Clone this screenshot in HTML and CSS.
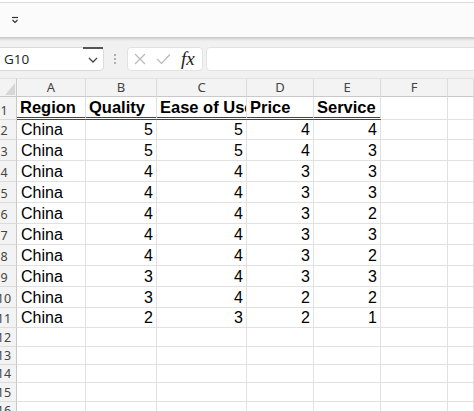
FILE: index.html
```html
<!DOCTYPE html>
<html>
<head>
<meta charset="utf-8">
<link rel="stylesheet" href="styles.css">
</head>
<body>
<div class="topstrip"></div>
<div class="toolbar">
  <svg class="qat" width="8" height="8" viewBox="0 0 8 8"><path d="M1 1.5H7" stroke="#333" stroke-width="1.2" fill="none"/><path d="M1.5 4L4 6.5L6.5 4" stroke="#333" stroke-width="1.2" fill="none"/></svg>
</div>
<div class="fbar">
  <div class="namebox">
    <span class="namebox-text">G10</span>
    <span class="namebox-btn"><svg width="10" height="6" viewBox="0 0 10 6"><path d="M1 1L5 5L9 1" stroke="#444" stroke-width="1.3" fill="none"/></svg></span>
  </div>
  <div class="dots"><i></i><i></i><i></i></div>
  <div class="fxbox">
    <svg class="ico-x" width="12" height="12" viewBox="0 0 12 12"><path d="M1 1L11 11M11 1L1 11" stroke="#b9b9b9" stroke-width="1.2" fill="none"/></svg>
    <svg class="ico-check" width="15" height="12" viewBox="0 0 15 12"><path d="M1 6L5.5 10.5L14 1.5" stroke="#b9b9b9" stroke-width="1.2" fill="none"/></svg>
    <span class="fx">fx</span>
  </div>
  <div class="finput"></div>
</div>
<div class="sheet">
  <div class="corner"><svg width="10" height="12" viewBox="0 0 10 12"><polygon points="10,0 10,12 0,12" fill="#d6d6d6"/></svg></div>
  <div class="ch">A</div><div class="ch">B</div><div class="ch">C</div><div class="ch">D</div><div class="ch">E</div><div class="ch">F</div><div class="ch"></div>

  <div class="rh"><span>1</span></div>
  <div class="c hd">Region</div><div class="c hd">Quality</div><div class="c hd">Ease of Use</div><div class="c hd">Price</div><div class="c hd">Service</div><div class="c"></div><div class="c"></div>

  <div class="rh"><span>2</span></div>
  <div class="c">China</div><div class="c n">5</div><div class="c n">5</div><div class="c n">4</div><div class="c n">4</div><div class="c"></div><div class="c"></div>
  <div class="rh"><span>3</span></div>
  <div class="c">China</div><div class="c n">5</div><div class="c n">5</div><div class="c n">4</div><div class="c n">3</div><div class="c"></div><div class="c"></div>
  <div class="rh"><span>4</span></div>
  <div class="c">China</div><div class="c n">4</div><div class="c n">4</div><div class="c n">3</div><div class="c n">3</div><div class="c"></div><div class="c"></div>
  <div class="rh"><span>5</span></div>
  <div class="c">China</div><div class="c n">4</div><div class="c n">4</div><div class="c n">3</div><div class="c n">3</div><div class="c"></div><div class="c"></div>
  <div class="rh"><span>6</span></div>
  <div class="c">China</div><div class="c n">4</div><div class="c n">4</div><div class="c n">3</div><div class="c n">2</div><div class="c"></div><div class="c"></div>
  <div class="rh"><span>7</span></div>
  <div class="c">China</div><div class="c n">4</div><div class="c n">4</div><div class="c n">3</div><div class="c n">3</div><div class="c"></div><div class="c"></div>
  <div class="rh"><span>8</span></div>
  <div class="c">China</div><div class="c n">4</div><div class="c n">4</div><div class="c n">3</div><div class="c n">2</div><div class="c"></div><div class="c"></div>
  <div class="rh"><span>9</span></div>
  <div class="c">China</div><div class="c n">3</div><div class="c n">4</div><div class="c n">3</div><div class="c n">3</div><div class="c"></div><div class="c"></div>
  <div class="rh"><span>10</span></div>
  <div class="c">China</div><div class="c n">3</div><div class="c n">4</div><div class="c n">2</div><div class="c n">2</div><div class="c"></div><div class="c"></div>
  <div class="rh"><span>11</span></div>
  <div class="c">China</div><div class="c n">2</div><div class="c n">3</div><div class="c n">2</div><div class="c n">1</div><div class="c"></div><div class="c"></div>

  <div class="rh"><span>12</span></div>
  <div class="c"></div><div class="c"></div><div class="c"></div><div class="c"></div><div class="c"></div><div class="c"></div><div class="c"></div>
  <div class="rh"><span>13</span></div>
  <div class="c"></div><div class="c"></div><div class="c"></div><div class="c"></div><div class="c"></div><div class="c"></div><div class="c"></div>
  <div class="rh"><span>14</span></div>
  <div class="c"></div><div class="c"></div><div class="c"></div><div class="c"></div><div class="c"></div><div class="c"></div><div class="c"></div>
  <div class="rh"><span>15</span></div>
  <div class="c"></div><div class="c"></div><div class="c"></div><div class="c"></div><div class="c"></div><div class="c"></div><div class="c"></div>
  <div class="rh"><span>16</span></div>
  <div class="c"></div><div class="c"></div><div class="c"></div><div class="c"></div><div class="c"></div><div class="c"></div><div class="c"></div>
</div>
</body>
</html>
```
FILE: styles.css
```css
* { box-sizing: border-box; }
html, body { margin: 0; padding: 0; }
body {
  width: 474px;
  height: 411px;
  overflow: hidden;
  background: #f1f1f1;
  font-family: "Liberation Sans", Arial, sans-serif;
}
.topstrip { height: 2px; background: #ffffff; }
.toolbar {
  height: 35px;
  margin: 0 -12px 0 -10px;
  background: #fbfbfb;
  border-top: 1px solid #dcdcdc;
  border-radius: 8px;
  box-shadow: 0 2px 3px rgba(0,0,0,0.18);
  display: flex;
  align-items: center;
  padding-left: 21px;
}
.qat { display: block; }
.fbar {
  display: flex;
  align-items: center;
  margin-top: 10px;
  height: 24px;
}
.namebox {
  margin-left: -8px;
  width: 112px;
  height: 24px;
  background: #ffffff;
  border: 1px solid #dadada;
  border-radius: 4px;
  display: flex;
  align-items: center;
  justify-content: space-between;
  padding-left: 11px;
  font-family: "Open Sans", "Noto Sans", sans-serif;
  font-size: 13.5px;
  color: #222;
}
.namebox-text { line-height: 22px; }
.namebox-btn {
  width: 20px;
  height: 23px;
  margin-top: -1px;
  border-top: 2px solid #555;
  display: flex;
  align-items: center;
  justify-content: center;
}
.dots {
  margin-left: 9px;
  width: 4px;
  display: flex;
  flex-direction: column;
  align-items: center;
  gap: 2px;
}
.dots i { width: 2px; height: 2px; background: #999; border-radius: 1px; display: block; }
.fxbox {
  margin-left: 10px;
  width: 76px;
  height: 24px;
  background: #ffffff;
  border: 1px solid #e2e2e2;
  border-radius: 4px;
  display: flex;
  align-items: center;
  padding-left: 6px;
}
.ico-x { display: block; }
.ico-check { display: block; margin-left: 10px; }
.fx {
  margin-left: 10px;
  font-family: "Liberation Serif", "Times New Roman", serif;
  font-style: italic;
  font-size: 19px;
  color: #222;
  line-height: 20px;
}
.finput {
  margin-left: 3px;
  flex: 1;
  margin-right: -10px;
  height: 24px;
  background: #ffffff;
  border: 1px solid #e2e2e2;
  border-radius: 4px;
}
.sheet {
  margin-top: 7px;
  display: grid;
  grid-template-columns: 17px 69px 71px 90px 67px 67px 67px 1fr;
  grid-template-rows: 18.5px 23px repeat(10, 20.9px) repeat(5, 18.3px);
  background: #ffffff;
}
.corner {
  background: #f3f3f3;
  border-right: 1px solid #c9c9c9;
  border-bottom: 1px solid #c9c9c9;
  border-top: 1px solid #e2e2e2;
  display: flex;
  align-items: flex-end;
  justify-content: flex-end;
  padding: 0 1px 1px 0;
}
.corner svg { display: block; }
.ch {
  background: #f3f3f3;
  border-top: 1px solid #e2e2e2;
  border-right: 1px solid #dcdcdc;
  border-bottom: 1px solid #c9c9c9;
  font-family: "Noto Sans", "Open Sans", sans-serif;
  font-size: 13px;
  color: #444;
  text-align: center;
  line-height: 17px;
}
.rh {
  background: #f3f3f3;
  border-right: 1px solid #c9c9c9;
  border-bottom: 1px solid #dcdcdc;
  overflow: hidden;
  display: flex;
  align-items: flex-end;
  font-family: "Noto Sans", "Open Sans", sans-serif;
  font-size: 12.5px;
  color: #444;
}
.rh span {
  flex: none;
  width: 26px;
  margin-left: -9px;
  text-align: center;
  line-height: 17px;
}
.c {
  border-right: 1px solid #e1e1e1;
  border-bottom: 1px solid #e1e1e1;
  font-size: 16px;
  color: #000;
  padding: 0 3px 0 4px;
  white-space: nowrap;
  overflow: hidden;
  display: flex;
  align-items: flex-end;
  line-height: 18px;
}
.n { justify-content: flex-end; }
.hd {
  font-weight: bold;
  font-size: 16.5px;
  border-bottom: 3px double #444;
  padding-left: 3px;
  line-height: 19px;
}
```
